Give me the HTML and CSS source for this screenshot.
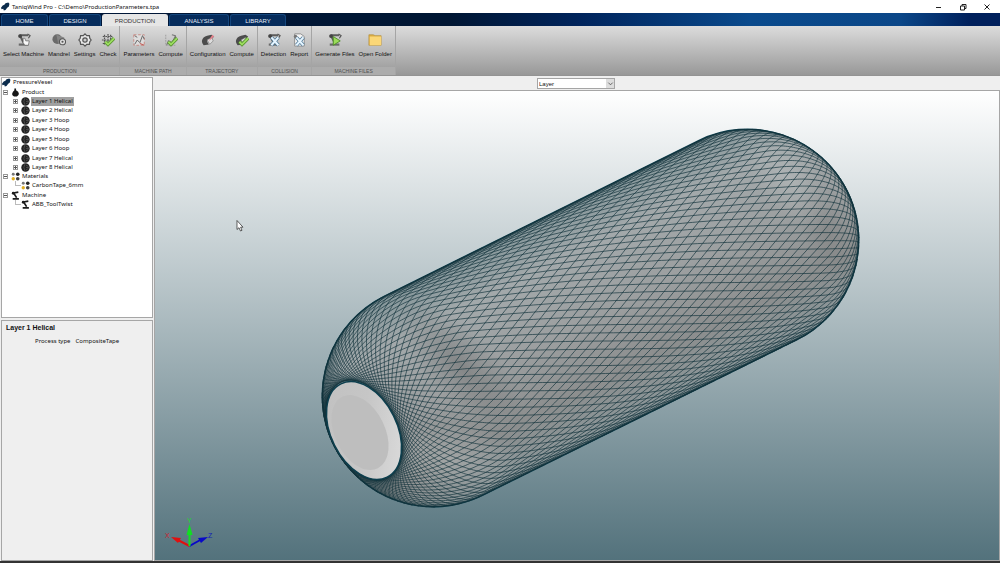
FILE: index.html
```html
<!DOCTYPE html>
<html lang="en">
<head>
<meta charset="utf-8">
<title>TaniqWind Pro</title>
<link rel="stylesheet" href="styles.css">
</head>
<body>
<svg class="defs" aria-hidden="true">
  <defs>
    <symbol id="logo" viewBox="0 0 16 16"><path d="M0 10 3 6 6 5 8 2 13 1 15 3 14 8 11 10 8 14 5 15 4 12 1 13Z" fill="#0b2c4c"/></symbol>
    <symbol id="robot" viewBox="0 0 16 16"><path d="M3 2.500H13M4 4 8 12" stroke="#5c5c5c" stroke-width="2.400" fill="none"/><path d="M2 14.500V12H13V14.500Z" fill="#6a6a6a"/><circle cx="3.500" cy="3.500" r="2.200" fill="#444"/><path d="M12 1 15 3 13 6" fill="none" stroke="#555" stroke-width="1.300"/></symbol>
    <symbol id="hand" viewBox="0 0 16 16"><path d="M7 6 9 6 10 9 14 9 13 14 9 14 7 11Z" fill="#f8f8f8" stroke="#666" stroke-width=".8"/></symbol>
    <symbol id="gear" viewBox="0 0 16 16"><path d="M8 1 10 3 13 3 13.500 6 15 8 13.500 10 13 13 10 13 8 15 6 13 3 13 2.500 10 1 8 2.500 6 3 3 6 3Z" fill="#e8e8e8" stroke="#555" stroke-width="1.400"/><circle cx="8" cy="8" r="2.500" fill="#ccc" stroke="#555" stroke-width="1.400"/></symbol>
    <symbol id="tick" viewBox="0 0 16 16"><path d="M5 10 8 13 15 6" fill="none" stroke="#4f8a28" stroke-width="4"/><path d="M5 10 8 13 15 6" fill="none" stroke="#9bdc60" stroke-width="2.200"/></symbol>
    <symbol id="cross" viewBox="0 0 16 16"><path d="M5 5 13 14M13 5 5 14" fill="none" stroke="#4d7795" stroke-width="4"/><path d="M5 5 13 14M13 5 5 14" fill="none" stroke="#e6f5ff" stroke-width="2.400"/></symbol>
    <symbol id="path" viewBox="0 0 16 16"><path d="M3 14 5 9 9 12 13 3M9 2 13 3 14 7" fill="none" stroke="#777" stroke-width="1.200"/><path d="M2 2V14H14" fill="none" stroke="#999" stroke-dasharray="2 1"/></symbol>
    <symbol id="drum" viewBox="0 0 16 16"><path d="M1 9Q2 4 7 3L12 2 15 4 12 7 8 7 7 10 9 13 3 14Q1 12 1 9Z" fill="#4c4c4c"/><path d="M7 8 12 5 14 9 10 13Z" fill="#ddd" stroke="#777" stroke-width=".7"/></symbol>
    <symbol id="layer" viewBox="0 0 16 16"><circle cx="8" cy="8" r="7.500" fill="#222"/><path d="M7 2Q3 8 7 14M9 4 13 6M9 8H14M9 12 13 10" fill="none" stroke="#666" stroke-width="1"/></symbol>
    <symbol id="product" viewBox="0 0 16 16"><path d="M6 1H9L9 4Q14 6 14 10 13 15 8 15 2 15 2 10 3 6 6 4Z" fill="#161616"/></symbol>
    <symbol id="material" viewBox="0 0 16 16"><circle cx="4" cy="4" r="2.600" fill="#777"/><circle cx="12" cy="4" r="3.200" fill="#222"/><circle cx="4" cy="12" r="3" fill="#e0ad22"/><circle cx="12" cy="12" r="3.200" fill="#444"/></symbol>
    <symbol id="arm" viewBox="0 0 16 16"><path d="M2 4 13 2M5 4 10 12M3 14H14" fill="none" stroke="#1b1b1b" stroke-width="2.800"/><circle cx="4" cy="4" r="2.500" fill="#1b1b1b"/></symbol>
  </defs>
</svg>
<div class="app">
  <header class="titlebar">
    <svg class="app-icon"><use href="#logo"/></svg>
    <h1 class="title">TaniqWind Pro - C:\Demo\ProductionParameters.tpa</h1>
    <div class="window-buttons">
      <button type="button" aria-label="Minimize"><svg viewBox="0 0 8 8"><path d="M1 4.500H6" /></svg></button>
      <button type="button" aria-label="Restore"><svg viewBox="0 0 8 8"><path d="M1.500 3H5.500V7H1.500ZM3 3V1.500H7V5.500H5.500"/></svg></button>
      <button type="button" aria-label="Close"><svg viewBox="0 0 8 8"><path d="M1.500 1.500 6.500 6.500M6.500 1.500 1.500 6.500"/></svg></button>
    </div>
  </header>
  <nav class="tabs">
    <button type="button" class="tab tab-home">HOME</button>
    <button type="button" class="tab tab-design">DESIGN</button>
    <button type="button" class="tab active">PRODUCTION</button>
    <button type="button" class="tab tab-wide">ANALYSIS</button>
    <button type="button" class="tab tab-library">LIBRARY</button>
  </nav>
  <div class="ribbon">
    <section class="group">
      <div class="tools">
        <button type="button" class="tool"><svg viewBox="0 0 16 16"><use href="#robot"/><use href="#hand"/></svg>Select Machine</button>
        <button type="button" class="tool"><svg viewBox="0 0 16 16"><circle cx="6" cy="7" r="5.500" fill="#6a6a6a"/><path d="M5 2 14 5V12H7Z" fill="#858585"/><circle cx="12" cy="10" r="3.500" fill="#ddd" stroke="#555" stroke-width="1.200"/><circle cx="12" cy="10" r="1.200" fill="#555"/></svg>Mandrel</button>
        <button type="button" class="tool"><svg><use href="#gear"/></svg>Settings</button>
        <button type="button" class="tool"><svg viewBox="0 0 16 16"><path d="M2 4H13M1 8H13M2 12H10M4 2V14M8 1V13M11 2V9" stroke="#555" stroke-width="1.400" stroke-dasharray="2 1"/><use href="#tick"/></svg>Check</button>
      </div>
      <h2 class="group-label">PRODUCTION</h2>
    </section>
    <section class="group">
      <div class="tools">
        <button type="button" class="tool"><svg viewBox="0 0 16 16"><path d="M2 2H14V14H2Z" fill="#ddd" stroke="#c9857e" stroke-dasharray="3 2"/><path d="M3 13 6 8 9 11 12 3 14 7M3 3 6 5" fill="none" stroke="#666" stroke-width="1.100"/><path d="M9 12 14 14" stroke="#c0605a" stroke-width="1.300"/></svg>Parameters</button>
        <button type="button" class="tool"><svg viewBox="0 0 16 16"><use href="#path"/><use href="#tick"/></svg>Compute</button>
      </div>
      <h2 class="group-label">MACHINE PATH</h2>
    </section>
    <section class="group">
      <div class="tools">
        <button type="button" class="tool"><svg viewBox="0 0 16 16"><use href="#drum"/><path d="M9 9 11 5 13 2 15 4Z" fill="#e5828c"/></svg>Configuration</button>
        <button type="button" class="tool"><svg viewBox="0 0 16 16"><use href="#drum"/><use href="#tick"/></svg>Compute</button>
      </div>
      <h2 class="group-label">TRAJECTORY</h2>
    </section>
    <section class="group">
      <div class="tools">
        <button type="button" class="tool"><svg viewBox="0 0 16 16"><use href="#robot"/><use href="#cross"/></svg>Detection</button>
        <button type="button" class="tool"><svg viewBox="0 0 16 16"><path d="M3 1H10L14 4V15H3Z" fill="#f4f4f4" stroke="#888"/><circle cx="4" cy="4" r="2" fill="#777"/><use href="#cross"/></svg>Report</button>
      </div>
      <h2 class="group-label">COLLISION</h2>
    </section>
    <section class="group">
      <div class="tools">
        <button type="button" class="tool"><svg viewBox="0 0 16 16"><use href="#robot"/><path d="M6 4 14 9 6 14Z" fill="#9bdc5a" stroke="#4c8a26"/></svg>Generate Files</button>
        <button type="button" class="tool"><svg viewBox="0 0 16 16"><path d="M1 2H6L8 3H15V14H1Z" fill="#dcae45" stroke="#b08a35" stroke-width=".7"/><path d="M2 4H15V14H2Z" fill="#fbd777"/></svg>Open Folder</button>
      </div>
      <h2 class="group-label">MACHINE FILES</h2>
    </section>
  </div>
  <main class="workspace">
    <aside class="sidebar">
      <div class="panel tree-panel">
        <div class="row"><svg><use href="#logo"/></svg><span>PressureVesel</span></div>
        <ul class="tree">
          <li><div class="row"><i class="toggle minus"></i><svg><use href="#product"/></svg><span>Product</span></div>
            <ul class="branch layers">
              <li class="row"><i class="toggle"></i><svg><use href="#layer"/></svg><span class="selected">Layer 1 Helical</span></li>
              <li class="row"><i class="toggle"></i><svg><use href="#layer"/></svg><span>Layer 2 Helical</span></li>
              <li class="row"><i class="toggle"></i><svg><use href="#layer"/></svg><span>Layer 3 Hoop</span></li>
              <li class="row"><i class="toggle"></i><svg><use href="#layer"/></svg><span>Layer 4 Hoop</span></li>
              <li class="row"><i class="toggle"></i><svg><use href="#layer"/></svg><span>Layer 5 Hoop</span></li>
              <li class="row"><i class="toggle"></i><svg><use href="#layer"/></svg><span>Layer 6 Hoop</span></li>
              <li class="row"><i class="toggle"></i><svg><use href="#layer"/></svg><span>Layer 7 Helical</span></li>
              <li class="row"><i class="toggle"></i><svg><use href="#layer"/></svg><span>Layer 8 Helical</span></li>
            </ul>
          </li>
          <li><div class="row"><i class="toggle minus"></i><svg><use href="#material"/></svg><span>Materials</span></div>
            <ul class="branch"><li class="row"><i class="elbow"></i><svg><use href="#material"/></svg><span>CarbonTape_6mm</span></li></ul>
          </li>
          <li><div class="row"><i class="toggle minus"></i><svg><use href="#arm"/></svg><span>Machine</span></div>
            <ul class="branch"><li class="row"><i class="elbow"></i><svg><use href="#arm"/></svg><span>ABB_ToolTwist</span></li></ul>
          </li>
        </ul>
      </div>
      <div class="panel details">
        <h2>Layer 1 Helical</h2>
        <dl><dt>Process type</dt><dd>CompositeTape</dd></dl>
      </div>
    </aside>
    <section class="viewer">
      <div class="viewer-bar">
        <div class="select-box">
          <select aria-label="Display mode"><option>Layer</option></select>
          <svg class="chevron" viewBox="0 0 8 8"><path d="M1.500 3 4 5.500 6.500 3"/></svg>
        </div>
      </div>
      <div class="canvas">
        <svg class="scene" viewBox="155 91 844 469" role="img" aria-label="Wound pressure vessel">
          <defs>
            <linearGradient id="body" gradientUnits="userSpaceOnUse" x1="541" y1="219" x2="641" y2="417">
              <stop offset="0" stop-color="#84969a"/><stop offset=".2" stop-color="#a3a9ab"/><stop offset=".5" stop-color="#9c9fa0"/><stop offset=".78" stop-color="#8c8e8e"/><stop offset="1" stop-color="#8b979a"/>
            </linearGradient>
            <radialGradient id="shade"><stop offset="0" stop-color="#5c5c5c" stop-opacity=".4"/><stop offset="1" stop-color="#666" stop-opacity="0"/></radialGradient>
            <radialGradient id="glow"><stop offset="0" stop-color="#c3c8c8" stop-opacity=".4"/><stop offset="1" stop-color="#c3c8c8" stop-opacity="0"/></radialGradient>
            <linearGradient id="cap" x1="0" y1="0" x2="1" y2="1"><stop offset="0" stop-color="#c0c0c0"/><stop offset=".5" stop-color="#c6c6c6"/><stop offset="1" stop-color="#e0e0e0"/></linearGradient>
          </defs>
          <path d="M383.600 296.600 698.600 140.600A111 111 0 0 1 797.400 339.400L482.400 495.400A111 111 0 0 1 383.600 296.600Z" fill="url(#body)" stroke="#0d3f4e" stroke-width="1.500"/>
          <ellipse cx="460" cy="365" rx="85" ry="34" transform="rotate(45 460 365)" fill="url(#shade)"/>
          <ellipse cx="825" cy="225" rx="60" ry="25" transform="rotate(75 825 225)" fill="url(#shade)" opacity=".6"/>
          <ellipse cx="790" cy="180" rx="60" ry="30" transform="rotate(50 790 180)" fill="url(#glow)"/>
          <ellipse cx="450" cy="460" rx="70" ry="35" fill="url(#glow)"/>
          <g id="fibres" class="fibres"></g>
          <ellipse cx="364" cy="430.500" rx="33" ry="52" transform="rotate(-26.400 364 430.500)" fill="url(#cap)" stroke="#0d3f4e" stroke-width="1.500"/>
          <ellipse cx="360" cy="432.500" rx="25" ry="40" transform="rotate(-26.400 360 432.500)" fill="#bebebe"/>
          <g class="axes">
            <path d="M189.500 546 176 539" stroke="#e01010"/><path d="M171 537 181 538 178 543Z" fill="#e01010"/>
            <path d="M189.500 546 202 539" stroke="#0808c8"/><path d="M208 537 201 543 198 538Z" fill="#0808c8"/>
            <path d="M189.500 546V531" stroke="#10e020"/><path d="M189.500 524 192.500 535H186.500Z" fill="#10e020"/>
            <text x="165" y="538" fill="#d02030">X</text><text x="187" y="523" fill="#20d830">Y</text><text x="208" y="538" fill="#1020b8">Z</text>
          </g>
          <path d="M237 220.500V229.500L239 227.700 240.500 231 242 230.300 240.600 227.200H243Z" fill="#fff" stroke="#222" stroke-width=".7"/>
        </svg>
      </div>
    </section>
  </main>
  <footer class="taskbar"></footer>
</div>
<script src="vessel.js"></script>
</body>
</html>
```
FILE: styles.css
```css
* { box-sizing: border-box; }
body { margin: 0; font-family: "Noto Sans", "Open Sans", sans-serif; font-size: 6px; color: #111; }
h1, h2, ul, dl, dd { margin: 0; padding: 0; font-weight: normal; list-style: none; }
button { border: 0; padding: 0; background: none; color: inherit; font: inherit; }
.defs { position: absolute; width: 0; height: 0; }
.app { display: flex; flex-direction: column; height: 100vh; background: #efefef; overflow: hidden; }

.titlebar { display: flex; align-items: center; height: 13px; padding-left: 1px; background: #fff; flex: none; }
.app-icon { width: 9px; height: 9px; }
.title { margin-left: 2px; font-size: 6px; line-height: 12px; }
.window-buttons { display: flex; gap: 16px; margin-left: auto; padding-right: 9px; }
.window-buttons svg { display: block; width: 8px; height: 8px; fill: none; stroke: #222; stroke-width: 1; }

.tabs { display: flex; gap: 1px; height: 13px; flex: none; padding: 1px 0 0 1px; background: linear-gradient(90deg, #001638 0, #001633 45%, #00245c 58%, #0a4a8c 75%, #0b4788 90%, #00205c 97%); font-family: "Liberation Sans", Arial, sans-serif; color: #e6eef8; }
.tab { width: 66px; border: 1px solid #14477e; border-bottom: 0; border-radius: 3px 3px 0 0; background: #062c5c; }
.tab-home { width: 47px; }
.tab-design { width: 52px; }
.tab-wide { width: 60px; }
.tab-library { width: 56px; }
.tab.active { background: #e6e6e6; border-color: #e6e6e6; color: #333; }

.ribbon { display: flex; flex: none; height: 50px; background: linear-gradient(#dcdcdc, #989898); border-bottom: 1px solid #939393; font-family: "Liberation Sans", Arial, sans-serif; }
.group { display: flex; flex-direction: column; border-right: 1px solid #a5a5a5; }
.tools { display: flex; flex: 1; gap: 4px; padding: 7px 3px 0; }
.tool { display: flex; flex-direction: column; align-items: center; gap: 3px; height: 28px; line-height: 8px; white-space: nowrap; }
.tool svg { width: 14px; height: 14px; }
.group-label { height: 8px; line-height: 8px; font-size: 5px; text-align: center; color: #505050; background: #acacac; }

.workspace { display: flex; flex: 1; min-height: 0; gap: 1px; padding: 1px 0 0 1px; }
.sidebar { display: grid; grid-template-rows: 241fr 241fr; gap: 2px; width: 152px; flex: none; }
.panel { border: 1px solid #a6a6a6; }
.tree-panel { background: #fff; }
.details { padding: 2px 4px; }
.row { display: flex; align-items: center; height: 9px; }
.row svg { width: 9px; height: 9px; margin-right: 1px; flex: none; }
.row span { line-height: 9px; padding: 0 1px; white-space: nowrap; }
.tree { padding: 1px 0 0 1px; }
.branch { padding-left: 10px; }
.layers { display: flex; flex-direction: column; justify-content: space-between; height: 75px; }
.row .selected { background: #a0a0a0; }
.toggle { width: 5px; height: 5px; margin-right: 3px; border: 1px solid #999; background: linear-gradient(#555, #555) center / 3px 1px no-repeat, linear-gradient(#555, #555) center / 1px 3px no-repeat; }
.toggle.minus { background: linear-gradient(#555, #555) center / 3px 1px no-repeat; }
.tree > li + li { padding-bottom: 1px; }
.elbow { width: 6px; height: 5px; margin: 0 0 4px 2px; border: solid #bbb; border-width: 0 0 1px 1px; }
.details h2 { font-family: "Liberation Sans", Arial, sans-serif; font-size: 7px; font-weight: bold; line-height: 9px; }
.details dl { display: flex; gap: 5px; padding: 5px 0 0 29px; line-height: 9px; }

.viewer { display: flex; flex: 1; flex-direction: column; min-width: 0; }
.viewer-bar { display: flex; justify-content: center; height: 13px; padding: 1px 2px 0 0; flex: none; }
.select-box { position: relative; width: 78px; height: 11px; }
.select-box select { display: block; width: 100%; height: 100%; padding: 0 1px; border: 1px solid #a5a5a5; border-radius: 0; color: #111; font: 6px "Liberation Sans", Arial, sans-serif; appearance: none; background: linear-gradient(#ddd, #ddd) right / 8px 100% no-repeat, #fff; }
.chevron { position: absolute; top: 2px; right: 1px; width: 7px; height: 7px; fill: none; stroke: #555; pointer-events: none; }
.canvas { flex: 1; min-height: 0; border: 1px solid #a6a6a6; background: linear-gradient(#fff, #53727c); }
.scene { display: block; width: 100%; height: 100%; }
.fibres { fill: none; stroke: #12323c; stroke-width: .8; stroke-opacity: .85; }
.axes { fill: none; stroke-width: 2; }
.axes text { font: 7px "Liberation Sans", Arial, sans-serif; stroke: none; }
.taskbar { height: 2px; flex: none; background: #333; }
```
FILE: vessel.js
```js
// Draws helical fibre paths over a cylinder with two hemispherical domes.
const R = 111, OPENING = 53, LENGTH = 446.500, COUNT = 80;
const CYLINDER_K = 38, TILT_IN = 0.787, TILT_OUT = 0.617;
const AXIS = [0.8965, -0.443], NORMAL = [0.443, 0.8965], ORIGIN = [433, 396];

// Samples along the meridian: axial position, radius and accumulated angle.
function profile() {
  const polar = Math.asin(OPENING / R), span = Math.PI / 2 - polar, steps = 90;
  const slope = r => {
    const k = CYLINDER_K + (OPENING - CYLINDER_K) * (R - r) / (R - OPENING);
    const s = Math.min(k / r, 0.99999);
    return s / Math.sqrt(1 - s * s) / r;
  };
  const dome = [];
  let angle = 0;
  for (let i = 0; i <= steps; i++) {
    const a = polar + span * (i / steps) ** 2;
    if (i) {
      const b = polar + span * ((i - 1) / steps) ** 2;
      angle += slope(R * Math.sin((a + b) / 2)) * R * (a - b);
    }
    dome.push({ t: -R * Math.cos(a), r: R * Math.sin(a), angle, nz: -Math.cos(a), nr: Math.sin(a) });
  }
  const out = [...dome];
  for (let i = 1; i <= 80; i++) {
    const t = LENGTH * i / 80;
    out.push({ t, r: R, angle: angle + slope(R) * t, nz: 0, nr: 1 });
  }
  const total = 2 * angle + slope(R) * LENGTH;
  for (let i = steps - 1; i >= 0; i--) {
    const p = dome[i];
    out.push({ t: LENGTH - p.t, r: p.r, angle: total - p.angle, nz: -p.nz, nr: p.nr });
  }
  return out;
}

const samples = profile();
let d = "";
for (const dir of [1, -1]) {
  for (let i = 0; i < COUNT; i++) {
    let pen = false;
    for (const p of samples) {
      const phi = 2 * Math.PI * i / COUNT + dir * p.angle;
      const facing = TILT_IN * p.nr * Math.sin(phi) - TILT_OUT * p.nz;
      if (facing < 0) { pen = false; continue; }
      const u = TILT_IN * p.t + TILT_OUT * p.r * Math.sin(phi);
      const v = p.r * Math.cos(phi);
      const x = ORIGIN[0] + AXIS[0] * u + NORMAL[0] * v;
      const y = ORIGIN[1] + AXIS[1] * u + NORMAL[1] * v;
      d += (pen ? "L" : "M") + x.toFixed(1) + " " + y.toFixed(1);
      pen = true;
    }
  }
}
const path = document.createElementNS("http://www.w3.org/2000/svg", "path");
path.setAttribute("d", d);
document.getElementById("fibres").append(path);
```
